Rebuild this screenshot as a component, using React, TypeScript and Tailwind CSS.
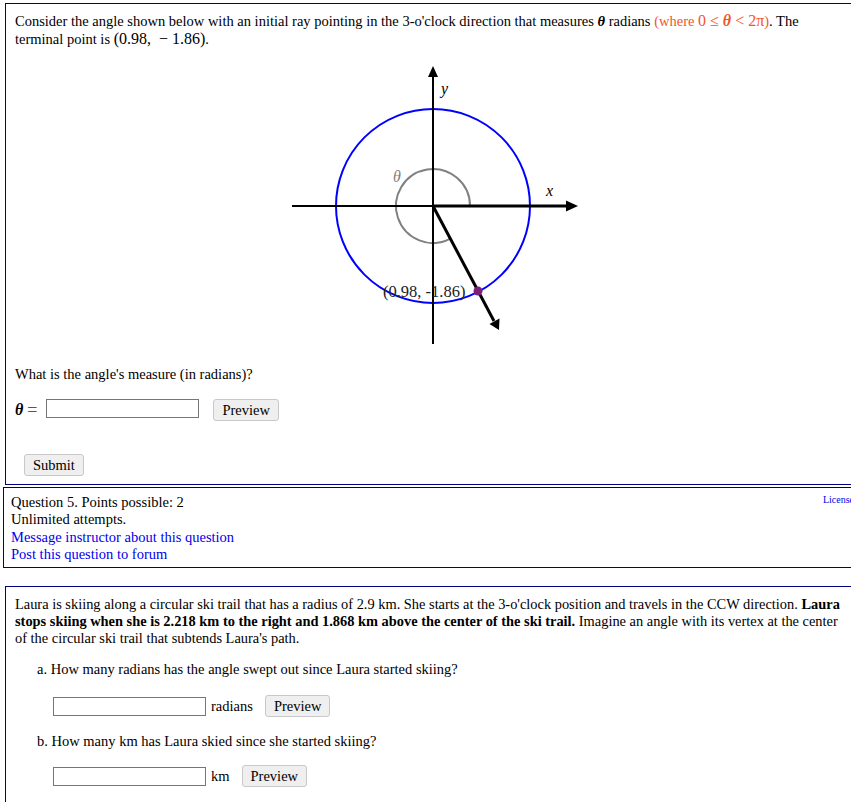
import React from 'react'

const serif = { fontFamily: '"Liberation Serif", "Times New Roman", serif' }

function Btn({ children }: { children: React.ReactNode }) {
  return (
    <button className="h-[22px] px-[8px] text-[14.5px] leading-none text-black bg-[#efefef] border border-[#c8c8c8] rounded-[3px]">
      {children}
    </button>
  )
}

function Field() {
  return <span className="inline-block w-[153px] h-[19px] border border-[#767676] bg-white" />
}

function Graph() {
  // center (150,150); terminal point (0.98, -1.86)
  return (
    <svg width="300" height="300" viewBox="0 0 300 300" className="block">
      <circle cx="150" cy="150" r="97" fill="none" stroke="#0000ff" strokeWidth="2" />
      <path d="M187 150 A37 37 0 1 0 167.3 182.7" fill="none" stroke="#808080" strokeWidth="2" />
      {/* y axis */}
      <line x1="150" y1="288" x2="150" y2="18" stroke="#000" strokeWidth="2" />
      <polygon points="150,10 145,21 155,21" fill="#000" />
      {/* x axis */}
      <line x1="9" y1="150" x2="150" y2="150" stroke="#000" strokeWidth="2" />
      <line x1="150" y1="150" x2="285" y2="150" stroke="#000" strokeWidth="3" />
      <polygon points="295,150 283,144.5 283,155.5" fill="#000" />
      {/* terminal ray */}
      <line x1="150" y1="150" x2="211" y2="265" stroke="#000" strokeWidth="3" />
      <polygon points="216,274 206.5,268 216.5,262.5" fill="#000" />
      <circle cx="195" cy="235" r="4.5" fill="#7b1f7b" />
      <text x="100" y="241" fontSize="16.5" fill="#222" style={serif}>(0.98, -1.86)</text>
      <text x="158" y="38" fontSize="16" fontStyle="italic" style={serif}>y</text>
      <text x="263" y="140" fontSize="16" fontStyle="italic" style={serif}>x</text>
      <text x="110" y="126" fontSize="16" fontStyle="italic" fill="#808080" style={serif}>θ</text>
    </svg>
  )
}

export default function App() {
  return (
    <div className="w-full overflow-hidden bg-white text-black text-[14.5px] leading-[18px]" style={serif}>
      {/* question 4 body */}
      <div className="ml-[5px] mt-[3px] w-[900px] border border-[#000080] pl-[9px] pt-[8px] pb-[8px]">
        <p className="w-[812px]">
          Consider the angle shown below with an initial ray pointing in the 3-o'clock direction that measures{' '}
          <b><i>θ</i></b> radians{' '}
          <span className="text-[#f2552c]">
            (where <span className="text-[16px]">0 ≤ <b><i>θ</i></b> &lt; 2π</span>)
          </span>
          . The terminal point is <span className="text-[16px]">(0.98,&nbsp; − 1.86)</span>.
        </p>
        <div className="ml-[268px] mt-[8px]">
          <Graph />
        </div>
        <p className="mt-[9px]">What is the angle's measure (in radians)?</p>
        <div className="mt-[16px] flex items-center h-[22px]">
          <b className="text-[16px]"><i>θ</i></b>
          <span className="ml-[4px] text-[18px] text-[#555]">=</span>
          <span className="ml-[9px]"><Field /></span>
          <span className="ml-[14px]"><Btn>Preview</Btn></span>
        </div>
        <div className="mt-[33px] ml-[9px] h-[22px]">
          <Btn>Submit</Btn>
        </div>
      </div>

      {/* question 5 header */}
      <div className="ml-[3px] mt-[2px] w-[856px] border border-[#000080] pl-[7px] pt-[6px] pb-[4px] flex leading-[17.3px]">
        <div className="flex-1">
          <div>Question 5. Points possible: 2</div>
          <div>Unlimited attempts.</div>
          <div className="text-[#0000ee]">Message instructor about this question</div>
          <div className="text-[#0000ee]">Post this question to forum</div>
        </div>
        <div className="-mt-[1px] text-[10px] leading-[14px] text-[#0000ee] pr-[4px]">License</div>
      </div>

      {/* question 5 body */}
      <div className="ml-[5px] mt-[18px] w-[900px] border border-[#000080] pl-[9px] pt-[9px] pb-[24px] leading-[17px]">
        <p className="w-[832px] text-[14.4px]">
          Laura is skiing along a circular ski trail that has a radius of 2.9 km. She starts at the 3-o'clock position
          and travels in the CCW direction.{' '}
          <b>Laura stops skiing when she is 2.218 km to the right and 1.868 km above the center of the ski trail.</b>{' '}
          Imagine an angle with its vertex at the center of the circular ski trail that subtends Laura's path.
        </p>
        <div className="pl-[22px]">
          <p className="mt-[14px]">a. How many radians has the angle swept out since Laura started skiing?</p>
          <div className="mt-[17px] ml-[16px] flex items-center h-[22px]">
            <Field />
            <span className="ml-[5px]">radians</span>
            <span className="ml-[12px]"><Btn>Preview</Btn></span>
          </div>
          <p className="mt-[16px]">b. How many km has Laura skied since she started skiing?</p>
          <div className="mt-[15px] ml-[16px] flex items-center h-[22px]">
            <Field />
            <span className="ml-[5px]">km</span>
            <span className="ml-[12px]"><Btn>Preview</Btn></span>
          </div>
        </div>
      </div>
    </div>
  )
}
